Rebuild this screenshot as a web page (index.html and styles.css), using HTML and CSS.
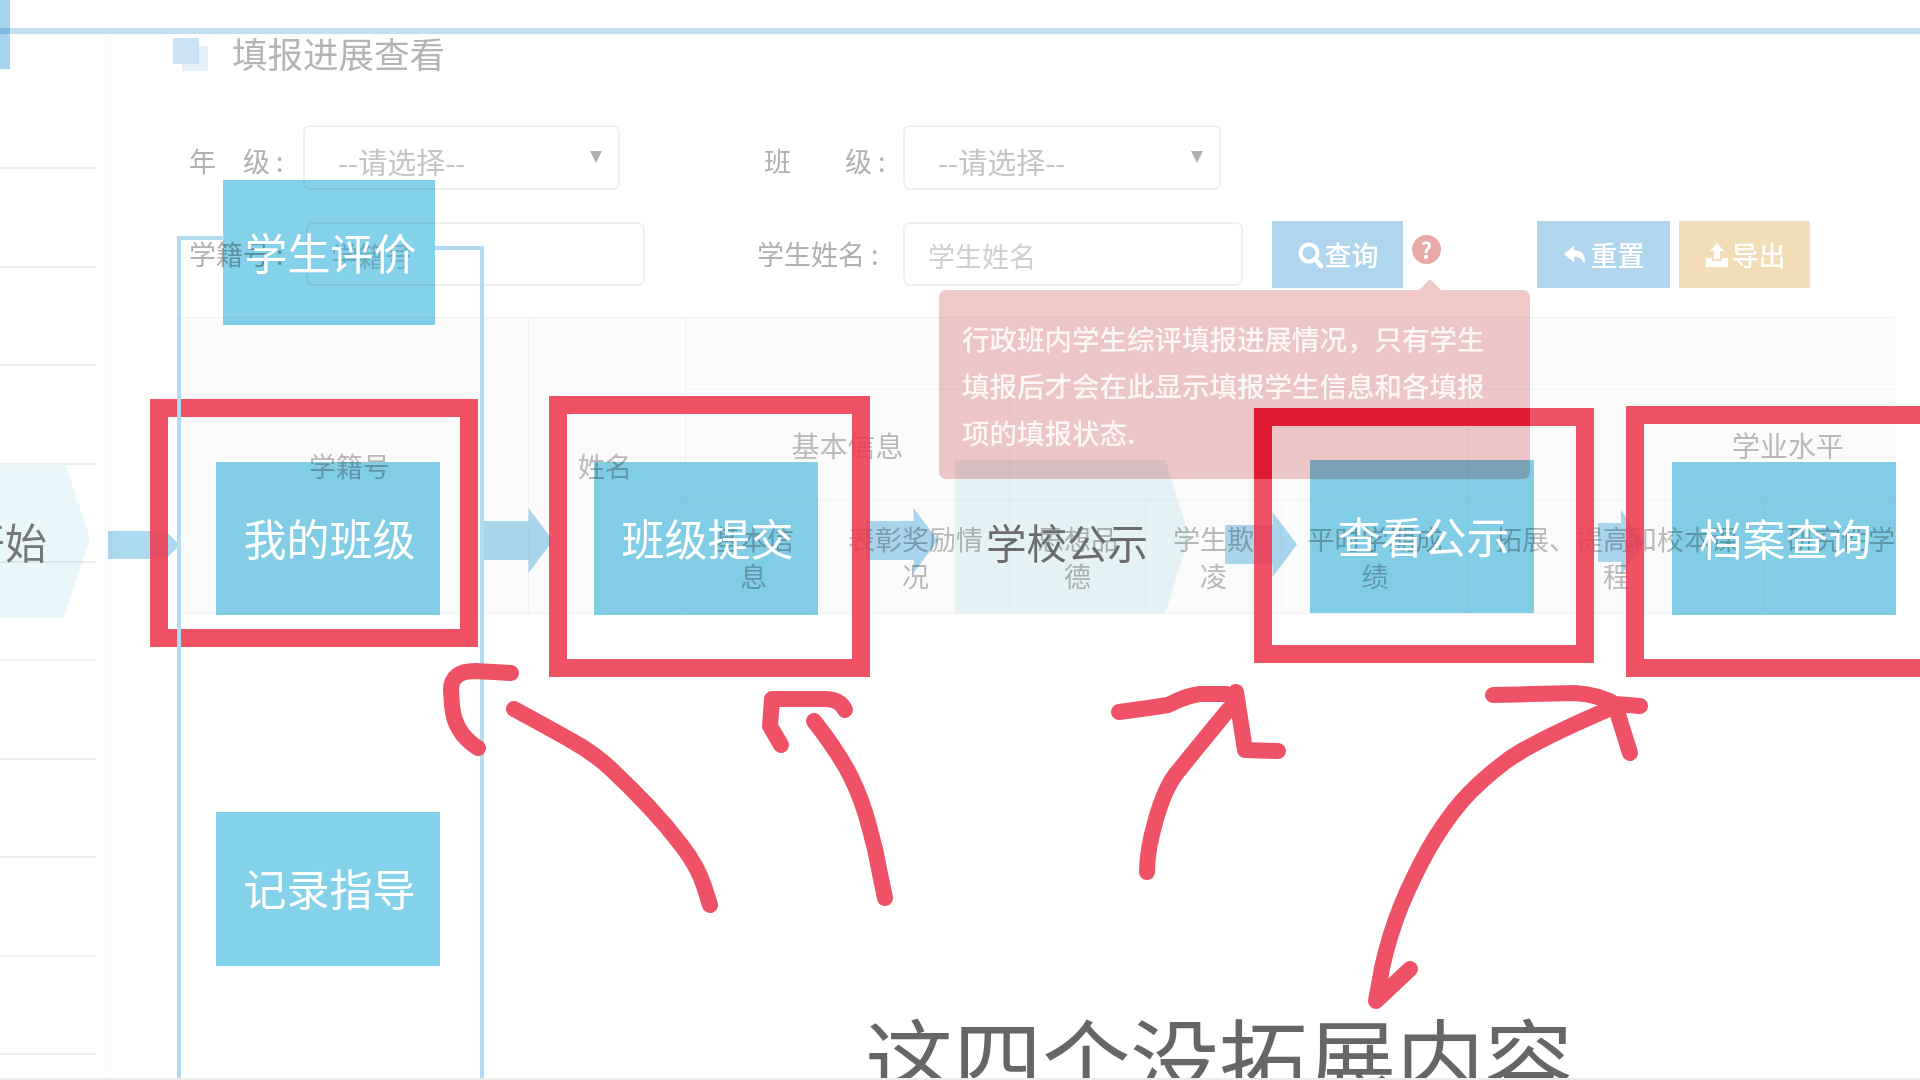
FILE: index.html
```html
<!DOCTYPE html>
<html lang="zh-CN">

<head>
  <meta charset="UTF-8" />
  <title>填报进展查看</title>
  <link rel="stylesheet" href="styles.css">
</head>

<body>
  <div class="page">

    <div class="topbar"></div>
    <div class="top-tab"></div>

    <div class="main">
      <div class="sidebar">
        <div class="sidebar-item"></div>
        <div class="sidebar-item"></div>
        <div class="sidebar-item"></div>
        <div class="sidebar-item"></div>
        <div class="sidebar-item"></div>
        <div class="sidebar-item"></div>
        <div class="sidebar-item"></div>
        <div class="sidebar-item"></div>
        <div class="sidebar-item"></div>
        <div class="sidebar-item"></div>
      </div>

      <div class="content">
        <div class="title">
          <span class="title-icon"></span>
          <h1>填报进展查看</h1>
        </div>

        <div class="form-row row-grade">
          <label class="label-grade">年　级 :</label>
          <div class="select select-grade"><span>--请选择--</span><i class="caret"></i></div>
          <label class="label-class">班　　级 :</label>
          <div class="select select-class"><span>--请选择--</span><i class="caret"></i></div>
        </div>

        <div class="form-row row-search">
          <label class="label-number">学籍号 :</label>
          <input class="input-number" type="text" placeholder="学籍号">
          <label class="label-name">学生姓名 :</label>
          <input class="input-name" type="text" placeholder="学生姓名">
          <button class="btn btn-info btn-query">
            <svg class="btn-icon" viewBox="0 0 26 28"><circle cx="12" cy="12" r="8.5" fill="none" stroke="#fff" stroke-width="4" /><path d="M18 18l6 7" stroke="#fff" stroke-width="4.5" stroke-linecap="round" /></svg>查询
          </button>
          <span class="help">?</span>
          <button class="btn btn-info btn-reset">
            <svg class="btn-icon" viewBox="0 0 28 28"><path d="M12 4L1 13l11 9v-6c6 0 9 2 11 8 2-9-2-15-11-15z" fill="#fff" /></svg>重置
          </button>
          <button class="btn btn-warn btn-export">
            <svg class="btn-icon" viewBox="0 0 26 28"><path d="M13 2l-7 8h4v8h6v-8h4z" fill="#fff" /><path d="M2 17h6v3h10v-3h6v9H2z" fill="#fff" /></svg>导出
          </button>
        </div>

        <table class="progress-table">
          <colgroup>
            <col class="col-number"><col class="col-name"><col class="col-a"><col class="col-b"><col class="col-a"><col class="col-a"><col class="col-c"><col class="col-d"><col class="col-e">
          </colgroup>
          <tbody>
            <tr class="row-top">
              <th rowspan="3" class="th-number">学籍号</th>
              <th rowspan="3" class="th-name">姓名</th>
              <th colspan="7"></th>
            </tr>
            <tr class="row-group">
              <th colspan="2" class="th-group">基本信息</th>
              <th colspan="3"></th>
              <th colspan="2" class="th-group th-level">学业水平</th>
            </tr>
            <tr class="row-cols">
              <td>基本信息</td>
              <td>表彰奖励情况</td>
              <td>思想品德</td>
              <td>学生欺凌</td>
              <td>平时学期成绩</td>
              <td>拓展、提高和校本课程</td>
              <td class="td-last">研究性学<br>&nbsp;</td>
            </tr>
          </tbody>
        </table>
      </div>
    </div>

    <!-- 流程图叠在截图上面 -->
    <div class="step-start"><span>开始</span></div>
    <div class="arrow arrow-small arrow-1"></div>
    <div class="arrow arrow-2"></div>
    <div class="arrow arrow-3"></div>
    <div class="arrow arrow-4"></div>
    <div class="arrow arrow-5"></div>
    <div class="step-public"></div>

    <div class="box box-eval"><span>学生评价</span></div>
    <div class="box box-class"><span>我的班级</span></div>
    <div class="box box-submit"><span>班级提交</span></div>
    <div class="box box-view"><span>查看公示</span></div>
    <div class="box box-archive"><span>档案查询</span></div>
    <div class="box box-record"><span>记录指导</span></div>
    <div class="step-public-text">学校公示</div>

    <div class="tooltip">
      <div class="tooltip-bg"></div>
      <p>行政班内学生综评填报进展情况，只有学生填报后才会在此显示填报学生信息和各填报项的填报状态.</p>
    </div>

    <div class="mark mark-1"></div>
    <div class="mark mark-2"></div>
    <div class="mark mark-3"></div>
    <div class="mark mark-4"></div>
    <div class="mark-overlap"></div>

    <svg class="sketch" viewBox="0 0 1920 1080">
      <path class="frame-line" d="M224 238H179V1080" />
      <path class="frame-line" d="M435 248H482V1080" />
      <path class="pen" d="M511 673L475 671Q451 671 451 690L452 705Q454 733 478 748" />
      <path class="pen" d="M514 709Q551 729 572 741Q594 753 612 770Q631 788 649 807Q667 826 682 846Q698 867 704 886L710 905" />
      <path class="pen" d="M845 710Q840 699 825 699L772 699L770 726L781 745" />
      <path class="pen" d="M814 721Q839 753 851 777Q863 802 869 826Q876 850 880 874L885 898" />
      <path class="pen" d="M1119 712Q1150 708 1168 705Q1185 696 1200 694L1226 694" />
      <path class="pen" d="M1236 692L1245 750L1278 751" />
      <path class="pen" d="M1229 709Q1187 760 1176 774Q1165 788 1156 819Q1147 850 1147 872" />
      <path class="pen" d="M1493 695L1575 693Q1600 695 1615 704L1640 706" />
      <path class="pen" d="M1615 705L1630 753" />
      <path class="pen" d="M1609 709Q1530 743 1505 762Q1480 781 1462 801Q1444 822 1428 850Q1413 877 1401 906Q1389 936 1382 968L1376 1001L1410 969" />
    </svg>

    <div class="note">这四个没拓展内容 ,</div>
    <div class="page-edge"></div>

  </div>
</body>

</html>
```

FILE: styles.css
```css
* {
  box-sizing: border-box;
}

body {
  margin: 0;
  background: #fff;
  font-family: "Noto Sans CJK SC", "Liberation Sans", sans-serif;
  color: #aaa;
}

/* the reference is an enlarged, soft screenshot */
.page {
  position: relative;
  width: 1920px;
  height: 1080px;
  overflow: hidden;
  background: #fff;
  filter: blur(0.6px);
}

.topbar {
  margin-top: 28px;
  height: 6px;
  background: #bfe0f2;
}

.top-tab {
  position: absolute;
  left: 0;
  top: 0;
  width: 10px;
  height: 69px;
  background: #a6d4ec;
  mix-blend-mode: multiply;
}

.main {
  display: flex;
  height: 1046px;
}

/* sidebar */
.sidebar {
  width: 113px;
  padding-top: 37px;
  border-right: 8px solid #fbfbfb;
}

.sidebar-item {
  width: 96px;
  height: 98.4px;
  border-bottom: 2px solid #eeeeee;
}

/* form */
.content {
  flex: 1;
}

.title {
  display: flex;
  align-items: center;
  height: 33px;
  margin: 2px 0 0 60px;
}

.title-icon {
  position: relative;
  top: 2px;
  width: 35px;
  height: 33px;
  margin-right: 24px;
  background: linear-gradient(#e3f0f9, #e3f0f9) 9px 8px / 26px 25px no-repeat;
}

.title-icon::before {
  content: "";
  position: absolute;
  left: 0;
  top: 0;
  width: 26px;
  height: 26px;
  background: #cbe4f4;
}

.title h1 {
  margin: 0;
  font-size: 35.5px;
  font-weight: 400;
  color: #b4b4b4;
}

.form-row {
  display: flex;
  margin-left: 76px;
  font-size: 27px;
}

.form-row label {
  color: #b0b0b0;
  white-space: nowrap;
}

.row-grade {
  margin-top: 56px;
  height: 65px;
  align-items: flex-start;
}

.row-grade label {
  padding-top: 16px;
  line-height: 40px;
}

.label-grade {
  width: 114px;
}

.label-class {
  width: 139px;
  margin-left: 144px;
}

.select {
  display: flex;
  justify-content: space-between;
  height: 65px;
  padding: 0 16px 0 33px;
  border: 2px solid #f0f0f0;
  border-radius: 7px;
  font-size: 29px;
  color: #c4c4c4;
}

.select span {
  padding-top: 14px;
  line-height: 40px;
}

.select-grade {
  width: 317px;
}

.select-class {
  width: 318px;
}

.caret {
  width: 0;
  height: 0;
  margin-top: 24px;
  border-left: 6px solid transparent;
  border-right: 6px solid transparent;
  border-top: 12px solid #b0b0b0;
}

.row-search {
  margin-top: 31px;
  height: 67px;
  align-items: flex-start;
}

.row-search label {
  padding-top: 12px;
  line-height: 42px;
}

.label-number {
  width: 117px;
}

.label-name {
  width: 146px;
  margin-left: 112px;
}

input {
  height: 64px;
  margin-top: 1px;
  padding: 2px 0 0 23px;
  border: 2px solid #f0f0f0;
  border-radius: 7px;
  background: transparent;
  font: 27px "Noto Sans CJK SC", sans-serif;
  outline: none;
}

input::placeholder {
  color: #cfcfcf;
}

.input-number {
  width: 339px;
}

.input-name {
  width: 340px;
}

.btn {
  display: flex;
  align-items: center;
  justify-content: center;
  height: 67px;
  padding: 0;
  border: 0;
  color: #fff;
  font: 500 27px "Noto Sans CJK SC", sans-serif;
}

.btn-icon {
  width: 26px;
  height: 28px;
  margin-right: 2px;
}

.btn-info {
  background: #afd6ec;
}

.btn-warn {
  background: #f3dcb8;
}

.btn-query {
  width: 131px;
  margin-left: 29px;
}

.btn-reset {
  width: 133px;
  margin-left: 96px;
}

.btn-export {
  width: 131px;
  margin-left: 9px;
}

.help {
  width: 29px;
  height: 29px;
  margin: 14px 0 0 9px;
  border-radius: 50%;
  background: #e8a9a6;
  color: #fff;
  font-size: 22px;
  font-weight: 700;
  line-height: 29px;
  text-align: center;
}

/* table */
.progress-table {
  width: 1714px;
  margin: 29px 0 0 67px;
  border-collapse: collapse;
  table-layout: fixed;
  background: #fbfbfb;
  font-size: 27px;
  color: #b8b8b8;
}

.progress-table th,
.progress-table td {
  padding: 0 16px;
  border: 1px solid #f2f2f2;
  font-weight: 400;
  text-align: center;
  line-height: 37px;
}

.col-number { width: 348px; }
.col-name { width: 157px; }
.col-a { width: 136px; }
.col-b { width: 188px; }
.col-c { width: 187px; }
.col-d { width: 296px; }
.col-e { width: 130px; }

.row-top { height: 72px; }
.row-group { height: 111px; }
.row-cols { height: 113px; }

.progress-table .th-number {
  padding-right: 26px;
}

.progress-table .th-name {
  padding-right: 20px;
}

.progress-table .th-group {
  font-size: 28px;
}

.progress-table .th-level {
  padding-right: 50px;
  text-align: right;
}

.progress-table .td-last {
  padding: 0 0 0 22px;
  text-align: left;
  white-space: nowrap;
}

/* flow diagram over the screenshot */
.step-start {
  position: absolute;
  left: -20px;
  top: 465px;
  width: 110px;
  height: 153px;
  background: #e9f7fb;
  clip-path: polygon(0 0, 78% 0, 100% 48%, 76% 100%, 0 100%);
  mix-blend-mode: multiply;
}

.step-start span {
  position: absolute;
  right: 43px;
  top: 48px;
  font-size: 42px;
  line-height: 56px;
  white-space: nowrap;
  color: #777;
}

.step-public {
  position: absolute;
  left: 955px;
  top: 460px;
  width: 234px;
  height: 153px;
  background: #e8f5f9;
  clip-path: polygon(0 0, 90% 0, 100% 50%, 90% 100%, 0 100%);
  mix-blend-mode: multiply;
}

.step-public-text {
  position: absolute;
  left: 986px;
  top: 512px;
  font-size: 40.5px;
  line-height: 60px;
  color: #6c6c6c;
}

.arrow {
  position: absolute;
  width: 72px;
  height: 65px;
  background: #abd9ef;
  clip-path: polygon(0 20%, 66% 20%, 66% 0, 100% 50%, 66% 100%, 66% 80%, 0 80%);
  mix-blend-mode: multiply;
}

.arrow-small {
  clip-path: polygon(0 0, 80% 0, 100% 50%, 80% 100%, 0 100%);
  height: 28px;
}

.arrow-1 { left: 108px; top: 531px; }
.arrow-2 { left: 481px; top: 508px; }
.arrow-3 { left: 866px; top: 508px; }
.arrow-4 { left: 1225px; top: 512px; }
.arrow-5 { left: 1598px; top: 510px; width: 46px; clip-path: polygon(0 20%, 50% 20%, 50% 0, 100% 50%, 50% 100%, 50% 80%, 0 80%); }

.box {
  position: absolute;
  display: flex;
  align-items: center;
  justify-content: center;
  width: 224px;
  height: 153px;
  padding: 0 0 4px 3px;
  color: #fff;
  font-size: 43px;
}

.box::before {
  content: "";
  position: absolute;
  inset: 0;
  background: #84d1ea;
  mix-blend-mode: multiply;
}

.box span {
  position: relative;
}

.box-eval { left: 223px; top: 180px; width: 212px; height: 145px; }
.box-class { left: 216px; top: 462px; }
.box-submit { left: 594px; top: 462px; }
.box-view { left: 1310px; top: 460px; }
.box-archive { left: 1672px; top: 462px; }
.box-record { left: 216px; top: 812px; height: 154px; }

.tooltip {
  position: absolute;
  left: 939px;
  top: 290px;
  width: 591px;
  height: 189px;
  padding: 25px 38px 0 23px;
}

.tooltip-bg {
  position: absolute;
  inset: 0;
  border-radius: 7px;
  background: #f0c9c9;
  mix-blend-mode: multiply;
}

.tooltip-bg::before {
  content: "";
  position: absolute;
  left: 480px;
  top: -11px;
  border-left: 11px solid transparent;
  border-right: 11px solid transparent;
  border-bottom: 11px solid #f0c9c9;
}

.tooltip p {
  position: relative;
  margin: 0;
  font-size: 27.5px;
  line-height: 47px;
  font-weight: 500;
  color: #fdf6f6;
}

/* red frames and pen strokes */
.mark {
  position: absolute;
  border: 18px solid rgba(237, 57, 80, 0.88);
}

.mark-1 { left: 150px; top: 399px; width: 328px; height: 248px; }
.mark-2 { left: 549px; top: 396px; width: 321px; height: 281px; }
.mark-3 { left: 1254px; top: 408px; width: 340px; height: 255px; }
.mark-4 { left: 1626px; top: 406px; width: 340px; height: 271px; }

/* where the frame crosses the tooltip it turns deeper red */
.mark-overlap {
  position: absolute;
  left: 1254px;
  top: 408px;
  width: 276px;
  height: 71px;
  border-top: 18px solid #e01b33;
  border-left: 18px solid #e01b33;
}

.sketch {
  position: absolute;
  left: 0;
  top: 0;
  width: 1920px;
  height: 1080px;
  fill: none;
}

.frame-line {
  stroke: #b2dcf1;
  stroke-width: 4;
}

.pen {
  stroke: #ef5266;
  stroke-width: 16;
  stroke-linecap: round;
  stroke-linejoin: round;
}

.note {
  position: absolute;
  left: 865px;
  top: 1005px;
  font-size: 88.5px;
  line-height: 100px;
  white-space: pre;
  color: #666;
}

.page-edge {
  position: absolute;
  left: 0;
  right: 0;
  bottom: 0;
  height: 2px;
  background: #ececec;
}
```
